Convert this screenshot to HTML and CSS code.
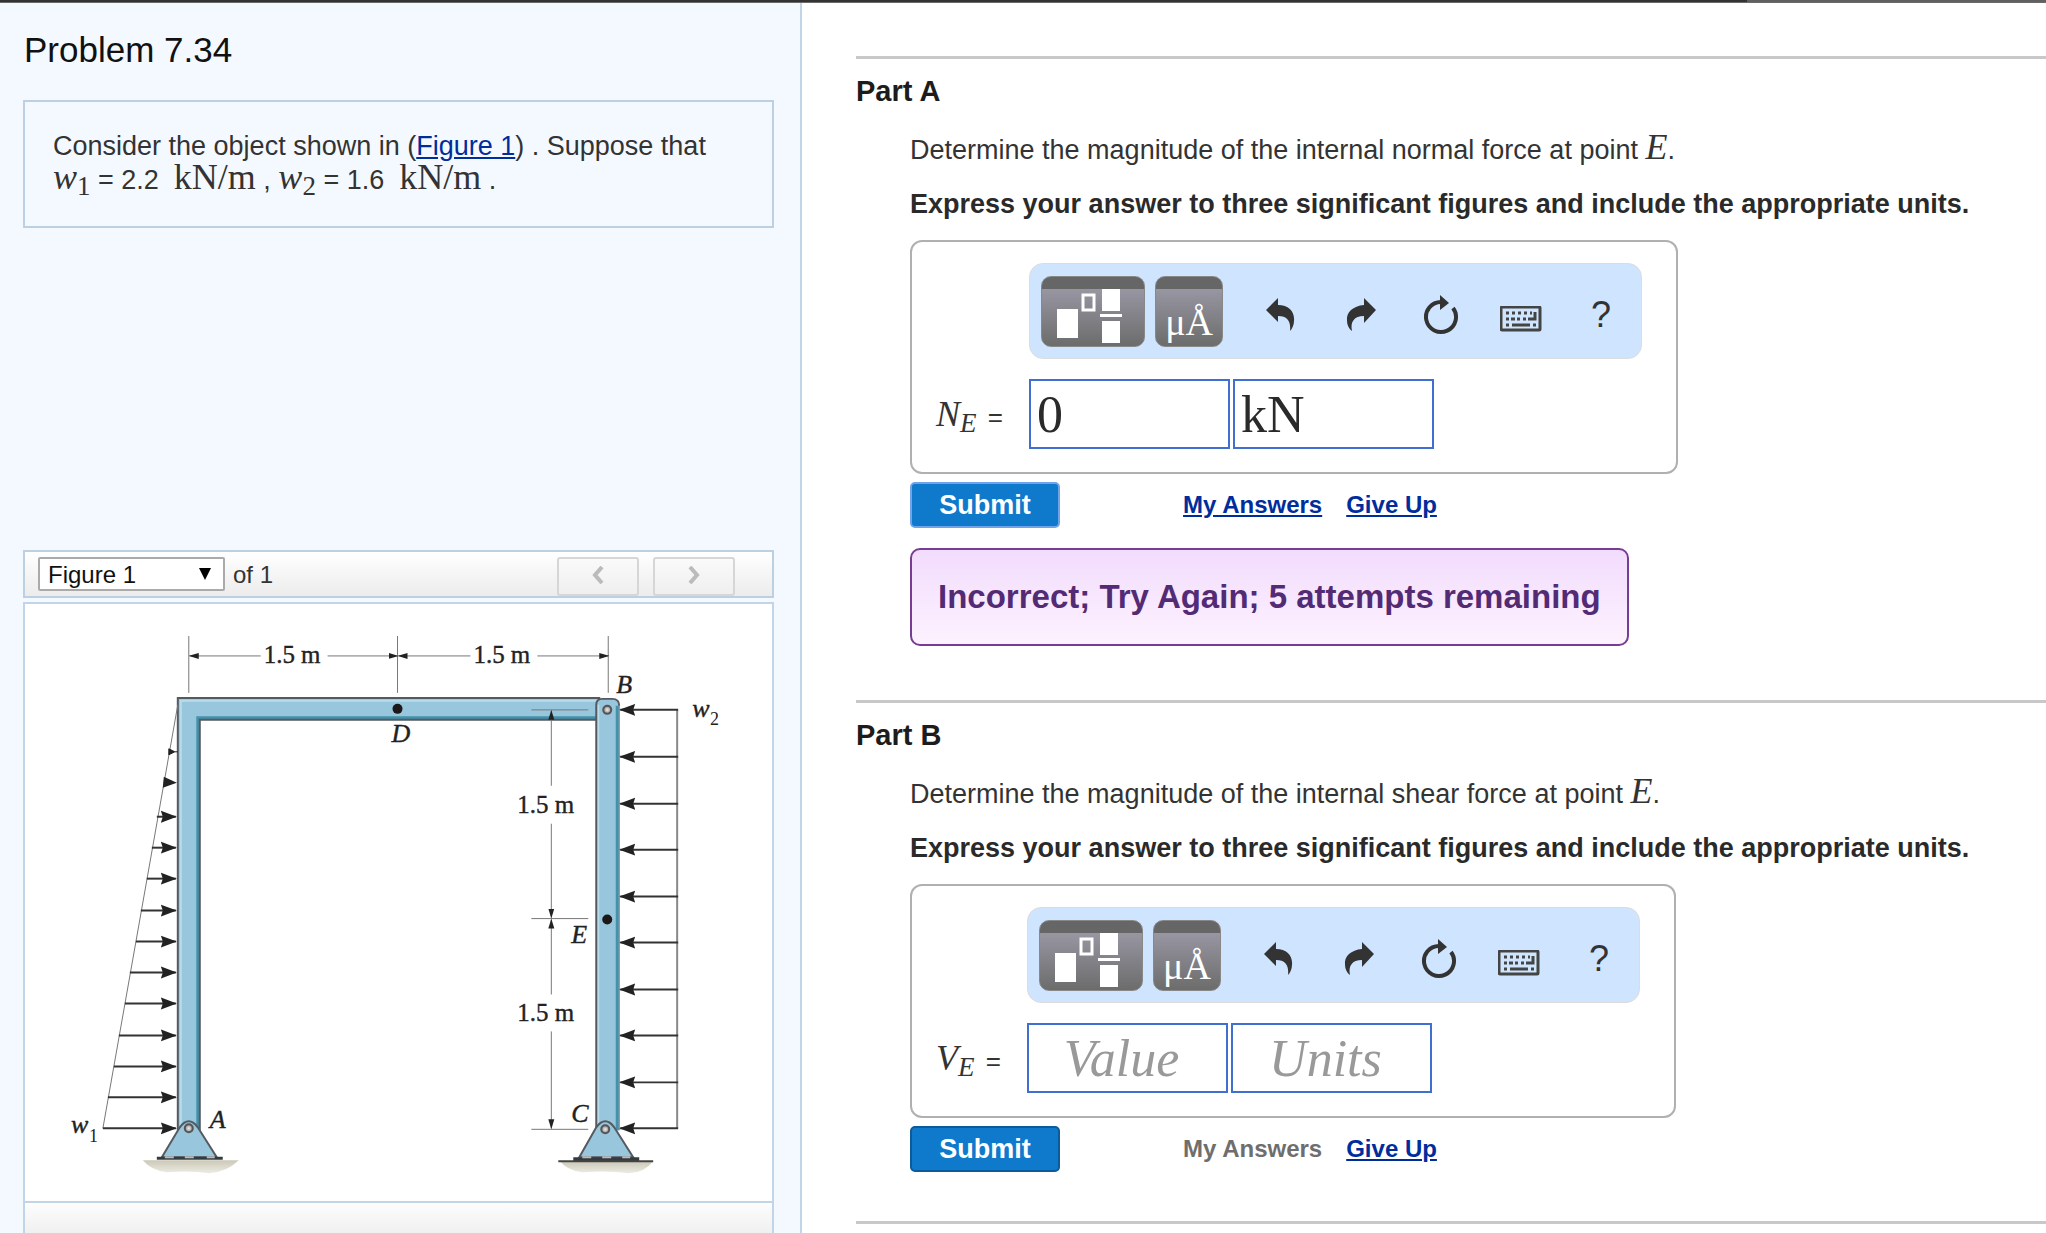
FILE: index.html
```html
<!DOCTYPE html>
<html lang="en">

<head>
  <meta charset="UTF-8">
  <meta name="viewport" content="width=device-width, initial-scale=1.0">
  <title>Problem 7.34</title>
  <link rel="stylesheet" href="styles.css">
</head>

<body>
  <!-- shared toolbar icons -->
  <svg class="sprite" aria-hidden="true">
    <symbol id="icon-template" viewBox="0 0 104 71">
      <rect x="16" y="33" width="21" height="29" fill="#fff" />
      <rect x="42" y="19" width="11" height="15" fill="none" stroke="#fff" stroke-width="3" />
      <rect x="61" y="13" width="18" height="22" fill="#fff" />
      <rect x="59" y="38" width="22" height="3" fill="#fff" />
      <rect x="61" y="45" width="18" height="22" fill="#fff" />
    </symbol>
    <symbol id="icon-undo" viewBox="0 0 30 34">
      <path d="M0 12 L12 0 V7 C23 7 29 14 28 23 C28 27 26 31 24 33 C25 24 22 18 12 18 V24 Z" fill="#333" />
    </symbol>
    <symbol id="icon-redo" viewBox="0 0 30 34">
      <path d="M30 12 L18 0 V7 C7 8 0 14 1 23 C1 27 3 31 6 33 C4 24 8 18 18 18 V25 Z" fill="#333" />
    </symbol>
    <symbol id="icon-reset" viewBox="0 0 36 40">
      <path d="M30 13 A15 15 0 1 1 18 7" fill="none" stroke="#333" stroke-width="4" />
      <path d="M17 0 L26 8 L17 15 Z" fill="#333" />
    </symbol>
    <symbol id="icon-keyboard" viewBox="0 0 42 26">
      <rect x="1" y="1" width="39" height="23" rx="1" fill="none" stroke="#444" stroke-width="3" />
      <path d="M6 7 H32" stroke="#444" stroke-width="3" stroke-dasharray="3 3" />
      <path d="M6 13 H9 M11 13 H15 M17 13 H20 M23 13 H26 M28 13 H35 V6" fill="none" stroke="#444" stroke-width="3" />
      <path d="M6 19 H9 M12 19 H30 M33 19 H36" stroke="#444" stroke-width="3" />
    </symbol>
  </svg>

  <div class="top-strip"></div>

  <div class="page">
    <div class="left-pane">
      <h1>Problem 7.34</h1>

      <div class="intro">
        Consider the object shown in (<a href="#figure">Figure 1</a>) . Suppose that
        <br>
        <span class="math"><i>w</i><sub>1</sub></span> = 2.2 &nbsp;<span class="math">kN/m</span> ,
        <span class="math"><i>w</i><sub>2</sub></span> = 1.6 &nbsp;<span class="math">kN/m</span> .
      </div>

      <div class="figure-bar">
        <div class="select-wrap">
          <select aria-label="Figure">
            <option>Figure 1</option>
          </select>
        </div>
        <span class="count">of 1</span>
        <button class="nav-button" type="button" aria-label="Previous figure">
          <svg width="12" height="18" viewBox="0 0 12 18"><path d="M10 1 L3 9 L10 17" /></svg>
        </button>
        <button class="nav-button" type="button" aria-label="Next figure">
          <svg width="12" height="18" viewBox="0 0 12 18"><path d="M2 1 L9 9 L2 17" /></svg>
        </button>
      </div>

      <div class="figure-box" id="figure">
        <svg class="frame-figure" viewBox="24 603 748 598" role="img" aria-label="Loaded frame">
          <defs>
            <marker id="load" markerUnits="userSpaceOnUse" markerWidth="16" markerHeight="14" refX="15" refY="7" orient="auto">
              <path d="M0 1 L16 7 L0 13 L2 7 Z" fill="#222" />
            </marker>
            <marker id="dim" markerUnits="userSpaceOnUse" markerWidth="10" markerHeight="8" refX="9" refY="4" orient="auto-start-reverse">
              <path d="M0 1 L10 4 L0 7 Z" fill="#222" />
            </marker>
            <radialGradient id="pin">
              <stop offset="0" stop-color="#eee" />
              <stop offset="1" stop-color="#888" />
            </radialGradient>
            <linearGradient id="ground" x1="0" y1="0" x2="0" y2="1">
              <stop offset="0" stop-color="#cbc8b6" />
              <stop offset="1" stop-color="#edece4" />
            </linearGradient>
          </defs>

          <!-- ground -->
          <path d="M142 1160 H238 Q226 1172 208 1173 Q190 1170 166 1172 Q150 1170 142 1160 Z" fill="url(#ground)" />
          <path d="M560 1161 H653 Q644 1173 628 1173 Q608 1170 582 1172 Q566 1170 560 1161 Z" fill="url(#ground)" />

          <!-- frame -->
          <path d="M177 1130 V697 H600 V719 H199 V1130 Z" fill="#98c6dc" />
          <path d="M180 1130 V700 H596" class="light" />
          <path d="M197 1130 V717 H596" class="shade" />
          <path d="M177 1130 V697 H600" class="edge" />
          <path d="M199 1130 V719 H596" class="edge" />
          <path d="M596 1130 V704 Q596 698 602 698 H612 Q619 698 619 705 V1130 Z" fill="#98c6dc" />
          <path d="M598 1130 V704" class="light" />
          <path d="M617 1130 V705" class="shade" />
          <path d="M596 1130 V704 Q596 698 602 698 H612 Q619 698 619 705" class="edge" />
          <path d="M619 704 V1130" stroke="#777" stroke-width="1" />

          <!-- supports -->
          <path d="M161 1157 L179 1127 Q188 1115 197 1127 L216 1157 Z" class="support" />
          <path d="M156 1158 H222" stroke="#333b40" stroke-width="3" />
          <path d="M579 1157 L596 1127 Q605 1115 614 1127 L633 1157 Z" class="support" />
          <path d="M573 1159 H639" stroke="#333b40" stroke-width="4" />
          <path d="M558 1161 H653" stroke="#444" stroke-width="2" />
          <path d="M164 1157 H173 M184 1157 H193 M206 1157 H214 M582 1157 H591 M602 1157 H611 M622 1157 H630" stroke="#bbb" stroke-width="2" />
          <circle cx="188" cy="1128" r="4" class="pin" />
          <circle cx="605" cy="1129" r="4" class="pin" />
          <circle cx="607" cy="709" r="4" class="pin" />
          <circle cx="397" cy="708" r="5" fill="#1c1718" />
          <circle cx="607" cy="919" r="5" fill="#1c1718" />

          <!-- dimensions -->
          <g class="dimension">
            <path d="M188 635 V692 M397 635 V692 M608 635 V692" />
            <path d="M531 709 H588 M531 918 H588 M531 1129 H588" />
            <path d="M260 655 H189" marker-end="url(#dim)" />
            <path d="M327 655 H397" marker-end="url(#dim)" />
            <path d="M470 655 H398" marker-end="url(#dim)" />
            <path d="M537 655 H608" marker-end="url(#dim)" />
            <path d="M551 785 V710" marker-end="url(#dim)" />
            <path d="M551 823 V917" marker-end="url(#dim)" />
            <path d="M551 994 V919" marker-end="url(#dim)" />
            <path d="M551 1031 V1128" marker-end="url(#dim)" />
          </g>

          <!-- load w1 -->
          <path d="M177 704 L102 1128" stroke="#777" stroke-width="1" />
          <path d="M168 748 L174 751 L168 754 Z M174 751 H177" fill="#222" stroke="#222" stroke-width="1" />
          <path d="M163 776 L176 782 L162 787 Z" fill="#222" />
          <g class="load">
            <path d="M156 816 H175" />
            <path d="M151 847 H175" />
            <path d="M146 878 H175" />
            <path d="M140 910 H175" />
            <path d="M135 941 H175" />
            <path d="M129 972 H175" />
            <path d="M124 1003 H175" />
            <path d="M118 1035 H175" />
            <path d="M113 1066 H175" />
            <path d="M107 1097 H175" />
            <path d="M102 1128 H175" />
          </g>

          <!-- load w2 -->
          <path d="M677 709 V1128" stroke="#888" stroke-width="2" />
          <g class="load">
            <path d="M678 709 H620" />
            <path d="M678 756 H620" />
            <path d="M678 803 H620" />
            <path d="M678 849 H620" />
            <path d="M678 896 H620" />
            <path d="M678 942 H620" />
            <path d="M678 989 H620" />
            <path d="M678 1035 H620" />
            <path d="M678 1082 H620" />
            <path d="M678 1128 H620" />
          </g>

          <g class="length">
            <text x="263" y="662">1.5 m</text>
            <text x="473" y="662">1.5 m</text>
            <text x="517" y="812">1.5 m</text>
            <text x="517" y="1021">1.5 m</text>
          </g>
          <g class="point">
            <text x="391" y="741">D</text>
            <text x="616" y="692">B</text>
            <text x="571" y="942">E</text>
            <text x="571" y="1122">C</text>
            <text x="209" y="1128">A</text>
            <text x="692" y="716">w</text>
            <text x="70" y="1133">w</text>
          </g>
          <g class="index">
            <text x="710" y="724">2</text>
            <text x="88" y="1142">1</text>
          </g>
        </svg>
      </div>
      <div class="figure-footer"></div>
    </div>

    <div class="right-pane">
      <section class="part">
        <h2>Part A</h2>
        <div class="part-body">
          <p>Determine the magnitude of the internal normal force at point <i class="math">E</i>.</p>
          <p class="instruction">Express your answer to three significant figures and include the appropriate units.</p>

          <form>
            <div class="answer-box">
              <div class="toolbar">
                <button class="tool-dark wide" type="button" aria-label="Templates"><svg width="104" height="71"><use href="#icon-template" /></svg></button>
                <button class="tool-dark" type="button" aria-label="Symbols">μÅ</button>
                <button class="tool" type="button" aria-label="Undo"><svg width="30" height="34"><use href="#icon-undo" /></svg></button>
                <button class="tool" type="button" aria-label="Redo"><svg width="30" height="34"><use href="#icon-redo" /></svg></button>
                <button class="tool" type="button" aria-label="Reset"><svg width="36" height="40"><use href="#icon-reset" /></svg></button>
                <button class="tool keyboard" type="button" aria-label="Keyboard shortcuts"><svg width="42" height="26"><use href="#icon-keyboard" /></svg></button>
                <button class="tool" type="button" aria-label="Help">?</button>
              </div>
              <label for="value-a"><span class="symbol"><i>N</i><sub>E</sub></span> =</label>
              <div class="fields">
                <input id="value-a" type="text" value="0">
                <input type="text" value="kN" aria-label="Units">
              </div>
            </div>
            <div class="actions">
              <button class="submit focused" type="submit">Submit</button>
              <a href="#answers">My Answers</a>
              <a href="#give-up">Give Up</a>
            </div>
          </form>

          <div class="feedback">Incorrect; Try Again; 5 attempts remaining</div>
        </div>
      </section>

      <section class="part">
        <h2>Part B</h2>
        <div class="part-body">
          <p>Determine the magnitude of the internal shear force at point <i class="math">E</i>.</p>
          <p class="instruction">Express your answer to three significant figures and include the appropriate units.</p>

          <form>
            <div class="answer-box">
              <div class="toolbar">
                <button class="tool-dark wide" type="button" aria-label="Templates"><svg width="104" height="71"><use href="#icon-template" /></svg></button>
                <button class="tool-dark" type="button" aria-label="Symbols">μÅ</button>
                <button class="tool" type="button" aria-label="Undo"><svg width="30" height="34"><use href="#icon-undo" /></svg></button>
                <button class="tool" type="button" aria-label="Redo"><svg width="30" height="34"><use href="#icon-redo" /></svg></button>
                <button class="tool" type="button" aria-label="Reset"><svg width="36" height="40"><use href="#icon-reset" /></svg></button>
                <button class="tool keyboard" type="button" aria-label="Keyboard shortcuts"><svg width="42" height="26"><use href="#icon-keyboard" /></svg></button>
                <button class="tool" type="button" aria-label="Help">?</button>
              </div>
              <label for="value-b"><span class="symbol"><i>V</i><sub>E</sub></span> =</label>
              <div class="fields">
                <input id="value-b" type="text" placeholder="Value">
                <input type="text" placeholder="Units" aria-label="Units">
              </div>
            </div>
            <div class="actions">
              <button class="submit" type="submit">Submit</button>
              <span class="disabled">My Answers</span>
              <a href="#give-up">Give Up</a>
            </div>
          </form>
        </div>
      </section>

      <div class="part-end"></div>
    </div>
  </div>
</body>

</html>
```
FILE: styles.css
```css
* {
  box-sizing: border-box;
}

body {
  margin: 0;
  min-height: 100vh;
  display: flex;
  flex-direction: column;
  font-family: "Liberation Sans", Arial, sans-serif;
  font-size: 27px;
  color: #333;
  background-color: #fff;
}

a {
  color: #002d9c;
}

button {
  font-family: inherit;
  padding: 0;
  cursor: pointer;
}

.sprite {
  display: none;
}

.top-strip {
  height: 3px;
  background: linear-gradient(to right, #333 85.4%, #606060 85.4%);
  border-bottom: 1px solid #6a6a6a;
}

.page {
  flex: 1;
  display: flex;
}

/* left side */

.left-pane {
  width: 39.2%;
  display: flex;
  flex-direction: column;
  padding: 0 26px 0 23px;
  background-color: #f4f9ff;
  border-right: 2px solid #c2d4e8;
}

h1 {
  margin: 26px 1px 29px;
  font-size: 35px;
  line-height: 42px;
  font-weight: normal;
  color: #111;
}

.intro {
  height: 128px;
  padding: 27px 20px 0 28px;
  border: 2px solid #bcd0e2;
  line-height: 34px;
}

.math {
  font-family: "Liberation Serif", serif;
  font-size: 36px;
  line-height: 24px;
}

.math sub,
.symbol sub {
  font-size: 27px;
  line-height: 0;
  vertical-align: -6px;
}

.figure-bar {
  display: flex;
  align-items: flex-end;
  height: 48px;
  margin: 322px 0 4px;
  padding: 0 37px 0 13px;
  border: 2px solid #bcd0e2;
  background: linear-gradient(#fff, #ececec);
  font-size: 24px;
}

.select-wrap {
  position: relative;
  height: 34px;
  margin-bottom: 5px;
}

.select-wrap::after {
  content: "";
  position: absolute;
  right: 14px;
  top: 11px;
  width: 12px;
  height: 12px;
  background-color: #000;
  clip-path: polygon(0 0, 100% 0, 50% 100%);
  pointer-events: none;
}

select {
  appearance: none;
  width: 187px;
  height: 34px;
  padding: 0 8px;
  border: 2px solid #aaa;
  border-radius: 2px;
  background-color: #fff;
  font-family: inherit;
  font-size: 24px;
  color: #111;
}

.count {
  flex: 1;
  margin: 0 0 7px 8px;
}

.nav-button {
  width: 82px;
  height: 39px;
  margin-left: 14px;
  border: 2px solid #d6d6d6;
  border-radius: 3px;
  background: linear-gradient(#fafafa, #efefef);
}

.nav-button path {
  fill: none;
  stroke: #bbb;
  stroke-width: 4;
}

.figure-box {
  border: 2px solid #c2d4e8;
  background-color: #fff;
}

.frame-figure {
  display: block;
  width: 100%;
}

.figure-footer {
  flex: 1;
  min-height: 28px;
  border: solid #c2d4e8;
  border-width: 0 2px;
  background: linear-gradient(#fdfdfd, #f0f0f0);
}

.edge {
  fill: none;
  stroke: #555a60;
  stroke-width: 2;
}

.light {
  fill: none;
  stroke: #b9dcea;
  stroke-width: 2;
}

.shade {
  fill: none;
  stroke: #4292ad;
  stroke-width: 3;
}

.support {
  fill: #98c6dc;
  stroke: #555a60;
  stroke-width: 2;
}

.pin {
  fill: url(#pin);
  stroke: #555;
  stroke-width: 2;
}

.dimension path {
  stroke: #777;
  stroke-width: 1;
}

.load path {
  stroke: #333;
  stroke-width: 2;
  marker-end: url(#load);
}

.length,
.point,
.index {
  font-family: "Liberation Serif", serif;
  font-size: 25px;
  fill: #222;
}

.length,
.point {
  stroke: #222;
  stroke-width: 0.4;
}

.point {
  font-size: 26px;
  font-style: italic;
}

.index {
  font-size: 18px;
}

/* right side */

.right-pane {
  flex: 1;
  padding: 53px 0 0 54px;
}

.part {
  border-top: 3px solid #c8c8c8;
}

h2 {
  margin: 15px 0 0;
  font-size: 29px;
  line-height: 34px;
  color: #1c1c1c;
}

.part-body {
  padding: 25px 0 49px 54px;
}

p {
  margin: 0 0 20px;
  font-size: 27px;
  line-height: 34px;
}

.instruction {
  margin-bottom: 19px;
  font-weight: bold;
  color: #2a2a2a;
}

.answer-box {
  display: grid;
  grid-template-columns: auto auto;
  gap: 20px 26px;
  align-items: center;
  width: fit-content;
  padding: 21px 34px 23px 24px;
  border: 2px solid #b0b0b0;
  border-radius: 12px;
}

.toolbar {
  grid-column: 2;
  display: flex;
  align-items: center;
  width: 613px;
  height: 96px;
  padding-left: 11px;
  border: 1px solid #dcdcdc;
  border-radius: 14px;
  background-color: #cfe5ff;
}

.tool-dark {
  width: 69px;
  height: 71px;
  margin-right: 10px;
  padding-top: 22px;
  border: 1px solid #888;
  border-radius: 10px;
  background: linear-gradient(#666 12px, #9896a2 12px, #6c6c6c);
  font-family: "Liberation Serif", serif;
  font-size: 38px;
  line-height: 38px;
  color: #fff;
}

.tool-dark.wide {
  width: 104px;
  padding: 0;
}

.tool-dark svg {
  display: block;
  margin: -1px;
}

.tool {
  display: flex;
  justify-content: center;
  align-items: center;
  width: 81px;
  height: 71px;
  padding-top: 8px;
  border: none;
  background: none;
  font-size: 36px;
  color: #333;
}

.tool-dark + .tool {
  margin-left: 8px;
}

.keyboard {
  padding-top: 16px;
}

label {
  font-size: 26px;
}

.symbol {
  margin-right: 4px;
  font-family: "Liberation Serif", serif;
  font-size: 36px;
  line-height: 36px;
}

.symbol sub {
  font-style: italic;
}

.fields {
  display: flex;
  gap: 3px;
}

input {
  width: 201px;
  height: 70px;
  padding: 0 18px 0 6px;
  border: 2px solid #3f6fd0;
  font-family: "Liberation Serif", serif;
  font-size: 52px;
  color: #2a2a2a;
}

input::placeholder {
  font-style: italic;
  text-align: center;
  color: #999;
}

.actions {
  display: flex;
  align-items: center;
  gap: 24px;
  height: 46px;
  margin-top: 8px;
  font-size: 24px;
  font-weight: bold;
}

.submit {
  width: 150px;
  height: 46px;
  margin-right: 99px;
  border: 2px solid #0c5c9c;
  border-radius: 5px;
  background-color: #0f79cc;
  font-size: 27px;
  font-weight: bold;
  color: #fff;
}

.focused {
  border-color: #6fa3ea;
}

.disabled {
  color: #6e6e6e;
}

.feedback {
  width: fit-content;
  margin: 20px 0 5px;
  padding: 28px 26px;
  border: 2px solid #773d92;
  border-radius: 10px;
  background: linear-gradient(#f2dcfd, #fdf2ff);
  font-size: 33px;
  line-height: 38px;
  font-weight: bold;
  color: #532b74;
}

.part-end {
  border-top: 3px solid #c8c8c8;
}
```
